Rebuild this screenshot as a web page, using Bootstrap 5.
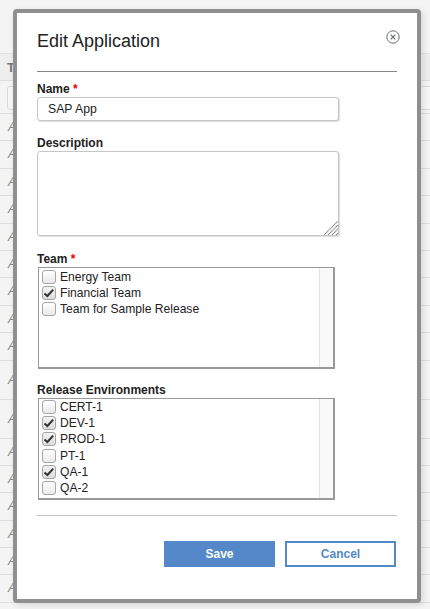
<!DOCTYPE html>
<html lang="en">
<head>
<meta charset="utf-8">
<title>Edit Application</title>
<link href="https://cdn.jsdelivr.net/npm/bootstrap@5.3.0/dist/css/bootstrap.min.css" rel="stylesheet">
<style>
html,body{height:609px;overflow:hidden}
body{font-family:"Liberation Sans",Arial,sans-serif;background:#f4f4f4;color:#222}
.page-top{height:54px;border-bottom:1px solid #e2e2e2}
.head-row{height:27px;background:#eeeeee;border-bottom:1px solid #dedede;padding:0 7px;font-size:13px;font-weight:700;color:#777;line-height:27px}
.filter-row{height:33px;border-bottom:1px solid #dedede;padding:5px 0 0 7px}
.filter-box{height:24px;margin-right:-10px;border:1px solid #d8d8d8;border-radius:3px;background:#f6f6f6}
.data-row{height:27.4px;border-bottom:1px solid #dedede;padding-left:8px;font-size:13px;font-style:italic;color:#888;line-height:26px}
.data-row.tall{height:39px;line-height:38px}
.dialog{position:absolute;left:13px;top:9px;width:408px;height:594px;border:4px solid #8f8f8f;border-radius:4px;background:#fff;padding:0 20px;box-shadow:2px 2px 6px rgba(0,0,0,.12)}
.dlg-head{height:58px}
.dlg-title{font-size:18px;font-weight:400;line-height:22px;margin:0;color:#222;padding-top:17px}
.dlg-close{width:14px;height:14px;padding:0;border:0;background:none;margin:17px -3px 0 0;display:block;line-height:0}
.rule-dark{margin:0;border:0;border-top:1px solid #868686;opacity:1}
.rule-light{margin:15px 0 0;border:0;border-top:1px solid #c4c4c4;opacity:1}
.field-name{font-size:12px;font-weight:700;line-height:14px;margin:10px 0 1px;color:#222;display:block}
.field-name b{color:#e00;font-weight:700}
.txt-input{width:302px;height:24px;border:1px solid #c6c6c6;border-radius:3px;padding:0 10px;font-size:12.25px;line-height:22px;color:#222;box-shadow:1px 1px 1px #ddd;font-family:inherit}
.area-wrap{width:302px;height:85px}
.txt-area{width:302px;height:85px;min-height:0;border:1px solid #c6c6c6;border-radius:3px;padding:4px 10px;font-size:12.25px;box-shadow:1px 1px 1px #ddd;resize:none;display:block}
.area-grip{position:absolute;right:1px;bottom:1px;width:14px;height:14px;display:block}
.gap-a{margin-top:15px}
.gap-b{margin-top:16px}
.gap-c{margin-top:14px}
.check-box{width:297px;height:102px;margin-left:1px;border:1px solid #999;border-width:1px 2px 2px 1px;display:flex;overflow:hidden}
.check-list{flex:1;padding:0 0 0 3px}
.team-list{padding-top:1px}
.check-track{width:14px;background:#f9f9f9;border-left:1px solid #e3e3e3}
.check-item{display:flex;align-items:center;height:16.2px;font-size:12.1px;color:#222;margin:0}
.check-item input{appearance:none;-webkit-appearance:none;width:14px;height:14px;margin:0 4px 0 0;border:1px solid #a6a6a6;border-radius:3px;background:linear-gradient(#fff,#e9e9e9);flex:none}
.check-item input:checked{background:url("data:image/svg+xml,%3Csvg xmlns='http://www.w3.org/2000/svg' viewBox='0 0 14 14'%3E%3Cpath d='M2.5 7.4 5.4 10 11.2 3.6' fill='none' stroke='%23333' stroke-width='2'/%3E%3C/svg%3E") center/14px no-repeat,linear-gradient(#f2f2f2,#dcdcdc)}
.btn-row{margin-top:25px;margin-right:1px;gap:10px}
.btn-save,.btn-quit{width:111px;height:26px;padding:0;border-radius:0;font-size:12px;font-weight:700;line-height:22px;border:2px solid #5488c8}
.btn-save{background:#5488c8;color:#fff}
.btn-quit{background:#fff;color:#5488c8}
</style>
</head>
<body>
<div class="page-top"></div>
<div class="head-row">T</div>
<div class="filter-row"><div class="filter-box"></div></div>
<div class="data-row">A</div><div class="data-row">A</div><div class="data-row">A</div><div class="data-row">A</div><div class="data-row">A</div><div class="data-row">A</div><div class="data-row">A</div><div class="data-row">A</div><div class="data-row">A</div>
<div class="data-row tall">A</div><div class="data-row tall">A</div>
<div class="data-row">A</div><div class="data-row">A</div><div class="data-row">A</div><div class="data-row">A</div><div class="data-row">A</div><div class="data-row">A</div>

<div class="dialog" role="dialog">
  <div class="dlg-head d-flex justify-content-between align-items-start">
    <h5 class="dlg-title">Edit Application</h5>
    <button class="dlg-close" type="button" aria-label="Close">
      <svg width="14" height="14" viewBox="0 0 14 14"><circle cx="7" cy="7" r="6.2" fill="none" stroke="#66706f" stroke-width="1"/><path d="M4.7 4.7 9.3 9.3M9.3 4.7 4.7 9.3" stroke="#66706f" stroke-width="1.2"/></svg>
    </button>
  </div>
  <hr class="rule-dark">
  <form>
    <label class="field-name">Name <b>*</b></label>
    <input class="form-control txt-input" type="text" value="SAP App">
    <label class="field-name gap-a">Description</label>
    <div class="area-wrap position-relative">
      <textarea class="form-control txt-area"></textarea>
      <svg class="area-grip" viewBox="0 0 14 14"><path d="M0 14 14 0M4 14 14 4M8 14 14 8M12 14 14 12" stroke="#808080" stroke-width="1.1" stroke-dasharray="1.2 .4" fill="none"/></svg>
    </div>
    <label class="field-name gap-b">Team <b>*</b></label>
    <div class="check-box">
      <div class="check-list team-list">
        <label class="check-item"><input type="checkbox">Energy Team</label>
        <label class="check-item"><input type="checkbox" checked>Financial Team</label>
        <label class="check-item"><input type="checkbox">Team for Sample Release</label>
      </div>
      <div class="check-track"></div>
    </div>
    <label class="field-name gap-c">Release Environments</label>
    <div class="check-box">
      <div class="check-list">
        <label class="check-item"><input type="checkbox">CERT-1</label>
        <label class="check-item"><input type="checkbox" checked>DEV-1</label>
        <label class="check-item"><input type="checkbox" checked>PROD-1</label>
        <label class="check-item"><input type="checkbox">PT-1</label>
        <label class="check-item"><input type="checkbox" checked>QA-1</label>
        <label class="check-item"><input type="checkbox">QA-2</label>
      </div>
      <div class="check-track"></div>
    </div>
  </form>
  <hr class="rule-light">
  <div class="d-flex justify-content-end btn-row">
    <button type="button" class="btn btn-save">Save</button>
    <button type="button" class="btn btn-quit">Cancel</button>
  </div>
</div>
<script src="https://cdn.jsdelivr.net/npm/bootstrap@5.3.0/dist/js/bootstrap.bundle.min.js"></script>
</body>
</html>
